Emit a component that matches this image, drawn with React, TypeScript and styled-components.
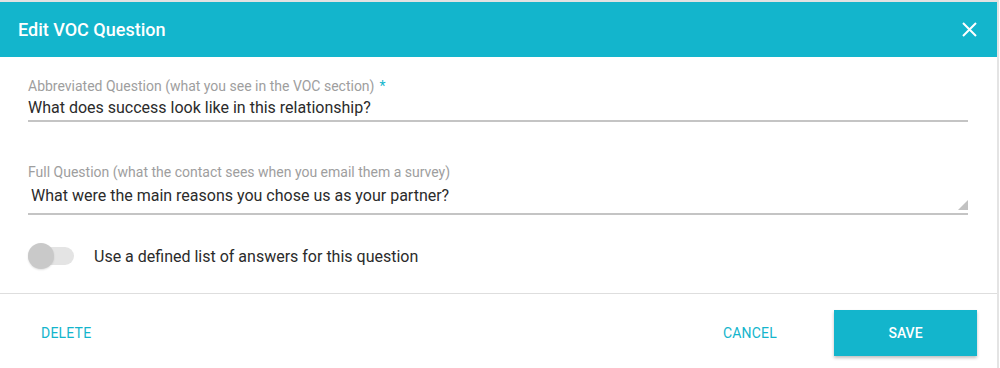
import React from "react";
import styled, { createGlobalStyle } from "styled-components";

const Global = createGlobalStyle`
  html, body { margin: 0; padding: 0; background: #ffffff; }
  body { font-family: Roboto, "Liberation Sans", Arial, sans-serif; }
  * { box-sizing: border-box; }
`;

const TEAL = "#13b5cc";

const Dialog = styled.div`
  width: 999px;
  height: 368px;
  border-top: 2px solid #e2e2e2;
  border-right: 2px solid #e4e4e4;
  background: #fff;
  display: flex;
  flex-direction: column;
`;

const Header = styled.header`
  height: 55px;
  background: ${TEAL};
  display: flex;
  align-items: center;
  justify-content: space-between;
  padding: 0 20px 0 18px;
`;

const Title = styled.h1`
  margin: 0;
  color: #fff;
  font-size: 18px;
  font-weight: 500;
  letter-spacing: 0;
`;

const CloseButton = styled.button`
  width: 16px;
  height: 16px;
  padding: 0;
  border: 0;
  background: transparent;
  display: flex;
  align-items: center;
  justify-content: center;
  cursor: pointer;
`;

const Body = styled.div`
  padding: 21px 29px 0 28px;
  display: flex;
  flex-direction: column;
`;

const Field = styled.div<{ $mt?: number }>`
  display: flex;
  flex-direction: column;
  margin-top: ${(p) => p.$mt ?? 0}px;
  position: relative;
`;

const Label = styled.label`
  font-size: 14px;
  line-height: 16px;
  color: #9e9e9e;
`;

const Required = styled.span`
  color: ${TEAL};
  margin-left: 5px;
`;

const Input = styled.input`
  height: 28px;
  border: 0;
  border-bottom: 2px solid #c4c4c4;
  padding: 0;
  font-family: inherit;
  font-size: 16px;
  color: #2b2b2b;
  outline: none;
  background: transparent;
`;

const TextArea = styled.textarea`
  height: 35px;
  border: 0;
  border-bottom: 2px solid #c4c4c4;
  padding: 6px 3px 7px;
  line-height: 20px;
  font-family: inherit;
  font-size: 16px;
  color: #2b2b2b;
  outline: none;
  resize: none;
  overflow: hidden;
  background: transparent;
`;

const Grip = styled.span`
  position: absolute;
  right: 0;
  bottom: 5px;
  width: 0;
  height: 0;
  border-left: 10px solid transparent;
  border-bottom: 10px solid #c2c2c2;
`;

const ToggleRow = styled.div`
  display: flex;
  align-items: center;
  height: 28px;
  margin-top: 27px;
  margin-bottom: 23px;
  gap: 20px;
`;

const Track = styled.span`
  position: relative;
  width: 46px;
  height: 18px;
  border-radius: 9px;
  background: #e4e4e4;
  display: inline-block;
`;

const Knob = styled.span`
  position: absolute;
  left: 0;
  top: -4px;
  width: 26px;
  height: 26px;
  border-radius: 50%;
  background: #c9c9c9;
  box-shadow: 0 1px 2px rgba(0, 0, 0, 0.12);
`;

const ToggleLabel = styled.span`
  font-size: 16px;
  color: #2b2b2b;
`;

const Divider = styled.hr`
  margin: 0;
  border: 0;
  border-top: 1px solid #dedede;
`;

const Footer = styled.footer`
  display: flex;
  align-items: center;
  justify-content: space-between;
  padding: 16px 20px 0 28px;
`;

const FlatButton = styled.button`
  height: 46px;
  padding: 0 13px;
  border: 0;
  background: transparent;
  color: ${TEAL};
  font-family: inherit;
  font-size: 14px;
  letter-spacing: 0.2px;
  text-transform: uppercase;
  cursor: pointer;
`;

const Actions = styled.div`
  display: flex;
  align-items: center;
  gap: 44px;
`;

const SaveButton = styled.button`
  width: 143px;
  height: 46px;
  border: 0;
  background: ${TEAL};
  color: #fff;
  font-family: inherit;
  font-size: 14px;
  font-weight: 500;
  text-transform: uppercase;
  box-shadow: 0 2px 3px rgba(0, 0, 0, 0.25);
  cursor: pointer;
`;

export default function App() {
  return (
    <>
      <Global />
      <Dialog>
        <Header>
          <Title>Edit VOC Question</Title>
          <CloseButton aria-label="Close">
            <svg width="15" height="15" viewBox="0 0 15 15">
              <path d="M1 1 L14 14 M14 1 L1 14" stroke="#fff" strokeWidth="2" />
            </svg>
          </CloseButton>
        </Header>
        <Body>
          <Field>
            <Label>
              Abbreviated Question (what you see in the VOC section)
              <Required>*</Required>
            </Label>
            <Input defaultValue="What does success look like in this relationship?" />
          </Field>
          <Field $mt={42}>
            <Label>Full Question (what the contact sees when you email them a survey)</Label>
            <TextArea defaultValue="What were the main reasons you chose us as your partner?" />
            <Grip />
          </Field>
          <ToggleRow>
            <Track>
              <Knob />
            </Track>
            <ToggleLabel>Use a defined list of answers for this question</ToggleLabel>
          </ToggleRow>
        </Body>
        <Divider />
        <Footer>
          <FlatButton>Delete</FlatButton>
          <Actions>
            <FlatButton>Cancel</FlatButton>
            <SaveButton>Save</SaveButton>
          </Actions>
        </Footer>
      </Dialog>
    </>
  );
}
